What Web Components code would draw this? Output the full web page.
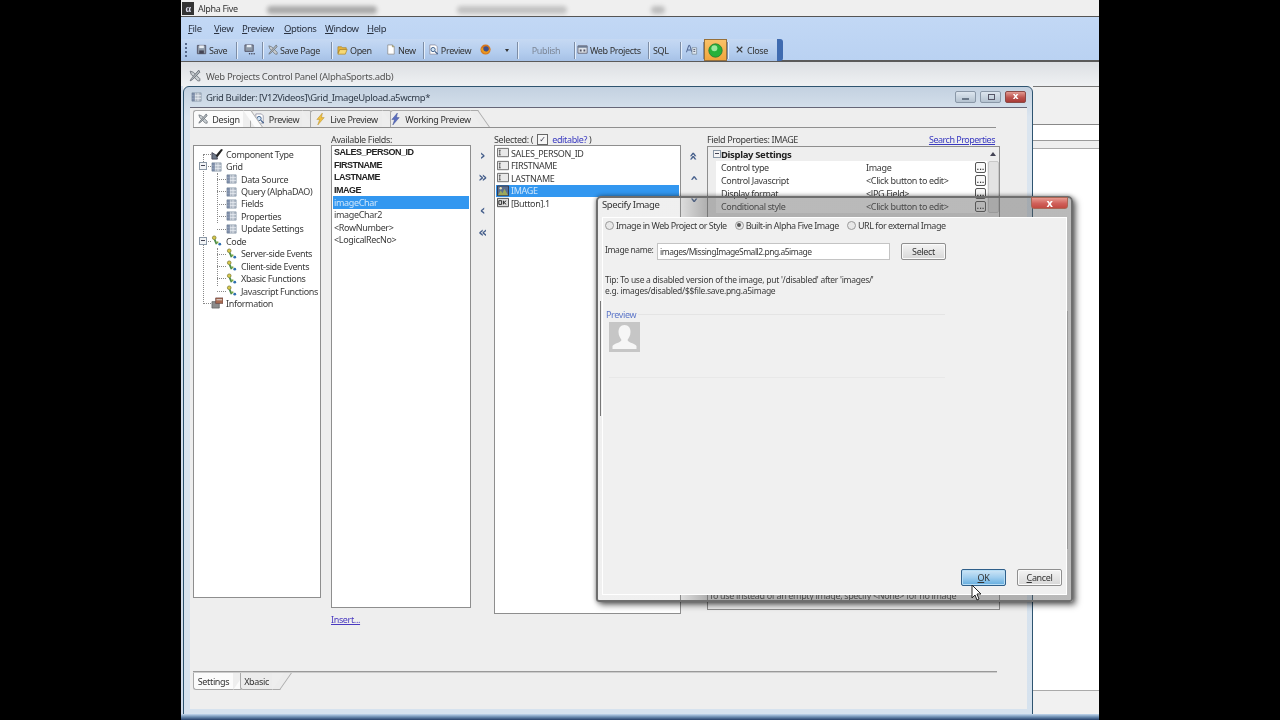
<!DOCTYPE html>
<html>
<head>
<meta charset="utf-8">
<title>Alpha Five</title>
<style>
html,body{margin:0;padding:0;background:#000;height:100%;overflow:hidden}
body{display:flex;justify-content:flex-start;padding-left:181px;box-sizing:border-box;font:9px "Noto Sans","Liberation Sans",sans-serif;letter-spacing:-.35px;color:#333}
</style>
</head>
<body>
<a5-app></a5-app>
<script>
const ICONS = {
	save:`<path d="M1.500 1.500h9v9h-9z" fill="#8d99a8" stroke="#556"/><path d="M3.500 1.500h5v3h-5z" fill="#e8eef5"/><path d="M3.500 7h5v3.500h-5z" fill="#445"/>`,
	saveall:`<path d="M1 1h9v7H1z" fill="#8d99a8" stroke="#556"/><path d="M3 1h5v2.500H3z" fill="#e8eef5"/><circle cx="6" cy="10.500" r=".8" fill="#334"/><circle cx="8.500" cy="10.500" r=".8" fill="#334"/><circle cx="11" cy="10.500" r=".8" fill="#334"/>`,
	tools:`<path d="M2 2l3 1 6 6 0 2-2 0-6-6z" fill="#c9ced2" stroke="#6a7078" stroke-width=".8"/><path d="M10 1l1 2-7 7-2 1 1-2z" fill="#aeb5ba" stroke="#6a7078" stroke-width=".8"/>`,
	open:`<path d="M1 3h4l1 1h4v2H3L1 10z" fill="#e5b43f" stroke="#a67c1c" stroke-width=".7"/><path d="M3 6h8l-2 5H1z" fill="#f6d874" stroke="#a67c1c" stroke-width=".7"/>`,
	doc:`<path d="M3 1h5l2 2v8H3z" fill="#fff" stroke="#888" stroke-width=".8"/><path d="M8 1v2h2" fill="#e0c060" stroke="#997"/>`,
	find:`<path d="M2 1h6l2 2v8H2z" fill="#fff" stroke="#889" stroke-width=".8"/><circle cx="5.500" cy="6" r="2.300" fill="#cfe3f5" stroke="#3a5a88"/><path d="M7.500 8l3 3" stroke="#3a5a88" stroke-width="1.300"/>`,
	firefox:`<circle cx="6" cy="6" r="5.500" fill="#d8761c"/><circle cx="6.500" cy="5.500" r="3" fill="#40508a"/><path d="M1 6c1 3 4 5 7 4 2-1 3-3 3-5-1 2-3 4-5 3C4 7.500 3 6 3.500 4 2 4 1.300 5 1 6z" fill="#e89a22"/>`,
	web:`<path d="M1 2h10v8H1z" fill="#dde3ea" stroke="#667"/><path d="M1 2h10v2H1z" fill="#6b7a92"/><path d="M3 6h2v2H3zM7 6h2v2H7z" fill="#556"/>`,
	font:`<path d="M.5 9L3 1.500h1L6.500 9M1.700 6.500h3.600" fill="none" stroke="#445a88" stroke-width="1"/><path d="M6.500 4h5v7h-5z" fill="#dfe9f2" stroke="#7b8a98" stroke-width=".8"/><path d="M8 6h2M8 8h2" stroke="#556"/>`,
	green:`<circle cx="6.500" cy="6.500" r="5.800" fill="#27b13a" stroke="#2a7a34" stroke-width=".7"/><circle cx="5.500" cy="4.500" r="2.600" fill="#9be89f"/>`,
	close:`<path d="M3 3l6 6M9 3l-6 6" stroke="#3a3a3a" stroke-width="1.300"/>`,
	grid:`<path d="M1 2h10v9H1z" fill="#b4bcc8" stroke="#8090a4" stroke-width=".7"/><path d="M4.300 2v9M7.600 2v9M1 5h10M1 8h10" stroke="#eef2f6" stroke-width=".8"/><path d="M1 2h3.300v9H1z" fill="#5c6f92" opacity=".6"/>`,
	type:`<path d="M1 12V5l5 3 1 4z" fill="#6f7a8a" stroke="#445"/><path d="M5 8l6-7 2 1-6 8z" fill="#222"/>`,
	code:`<circle cx="3.500" cy="3" r="2" fill="#d8c84a" stroke="#6a6a20" stroke-width=".7"/><path d="M4 5l2 5" stroke="#4a8a4a" stroke-width="2"/><circle cx="9.500" cy="10" r="1.500" fill="#2e6fb0"/><path d="M6 8h2" stroke="#7aa83c" stroke-width="2"/>`,
	info:`<path d="M1 5h8v7H1z" fill="#8c8c8c" stroke="#555" stroke-width=".7"/><path d="M5 1h8v6H5z" fill="#a86a50" stroke="#644" stroke-width=".7"/><path d="M6 3h6" stroke="#eee"/>`,
	field:`<path d="M.5 1.500h12v9H.5z" fill="#e9e9e9" stroke="#666"/><path d="M3 3.500v5M2 3.500h2M2 8.500h2" stroke="#333" stroke-width=".8"/>`,
	picture:`<path d="M.5 1h12v10.500H.5z" fill="#5a6e90" stroke="#334"/><path d="M1 11l3-5 2 3 2-5 4 7z" fill="#9ca85c"/><circle cx="4" cy="3.500" r="1.300" fill="#e8e0b0"/>`,
	button:`<path d="M.5 1.500h12v9H.5z" fill="#ddd" stroke="#444"/><path d="M2 4h3v4H2zM7 4v4M10 4L7.500 6l2.500 2" fill="none" stroke="#222" stroke-width="1"/>`,
	bolt:`<path d="M8 0L2 7h3L3 13l7-8H7z" fill="#f0c040" stroke="#b08820" stroke-width=".5"/>`,
	boltb:`<path d="M8 0L2 7h3L3 13l7-8H7z" fill="#5a6ec0" stroke="#3a4a90" stroke-width=".5"/>`
};
class A5Icon extends HTMLElement {
	constructor(){
		super();
		this.attachShadow({mode:"open"});
		const size = this.getAttribute("size")||12;
		this.shadowRoot.innerHTML = `
			<style>:host{display:inline-flex;flex:none;width:${size}px;height:${size}px}svg{display:block}</style>
			<svg width="${size}" height="${size}" viewBox="0 0 13 13">${ICONS[this.getAttribute("name")]||""}</svg>`;
	}
}
customElements.define("a5-icon",A5Icon);

class A5Menubar extends HTMLElement {
	constructor(){
		super();
		this.attachShadow({mode:"open"});
		const items = [["File",26],["View",28],["Preview",42],["Options",41],["Window",42],["Help",30]];
		this.shadowRoot.innerHTML = `
			<style>
				:host{display:flex;height:22px;align-items:center;padding-left:7px;font-size:9.500px;letter-spacing:-.4px;color:#2a3240}
				span{display:block}
				span::first-letter{text-decoration:underline}
			</style>
			${items.map(i=>`<span style="width:${i[1]}px">${i[0]}</span>`).join("")}`;
	}
}
customElements.define("a5-menubar",A5Menubar);

class A5Toolbar extends HTMLElement {
	constructor(){
		super();
		this.attachShadow({mode:"open"});
		// [icon, text, width of the whole item, left padding when it does not sit centred]
		const items = [
			["save","Save",41,1],"|",["saveall","",25],"|",["tools","Save Page",68,4],"|",
			["open","Open",50,5],["doc","New",41,3],"|",["find","Preview",51],["firefox","",22],["drop","",20],"|",
			[null,"Publish",56],"|",["web","Web Projects",73,2],"|",[null,"SQL",31,4],"|",["font","",22],"|",
			["green","",23],"|",["close","Close",46]
		];
		this.shadowRoot.innerHTML = `
			<style>
				:host{display:flex;align-items:center;height:22px;width:602px;box-sizing:border-box;padding-left:4px;white-space:nowrap;
					background:linear-gradient(#c6d9f3,#b4cdee 60%,#a6c1e6);border-right:6px solid #3f6bb0;border-radius:0 3px 3px 0;color:#333}
				.grip{width:2px;height:14px;margin-right:6px;border-left:2px dotted #56688a}
				.sep{width:1px;height:17px;background:#7d8da5;box-shadow:1px 0 #e4eefb;flex:none}
				.item{display:flex;align-items:center;justify-content:center;gap:1px;flex:none;height:22px;box-sizing:border-box}
				.item.off{color:#7d8797}
				.drop{width:0;height:0;border:2px solid transparent;border-top:3px solid #333;margin-top:3px}
				.on{background:linear-gradient(#f9c36a,#f0a53c);outline:1px solid #97703a;outline-offset:-1px}
			</style>
			<div class="grip"></div>
			${items.map(i=>{
				if (i=="|") return `<div class="sep"></div>`;
				if (i[0]=="drop") return `<div class="item" style="width:${i[2]}px"><div class="drop"></div></div>`;
				const cls = i[1]=="Publish"?"off":i[0]=="green"?"on":"";
				const place = i[3]===undefined?"":`justify-content:flex-start;padding-left:${i[3]}px;`;
				return `<div class="item ${cls}" style="${place}width:${i[2]}px">${i[0]?`<a5-icon name="${i[0]}" ${i[0]=="green"?'size="15"':""}></a5-icon>`:""}${i[1]?`<span>${i[1]}</span>`:""}</div>`;
			}).join("")}`;
	}
}
customElements.define("a5-toolbar",A5Toolbar);

class A5Tabs extends HTMLElement {
	constructor(){
		super();
		this.attachShadow({mode:"open"});
		const items = JSON.parse(this.getAttribute("items"));
		this.shadowRoot.innerHTML = `
			<style>
				:host{display:flex;align-items:flex-end;height:18px;color:#333;white-space:nowrap}
				.tab{position:relative;display:flex;align-items:center;justify-content:center;gap:3px;height:17px;box-sizing:border-box;
					border:1px solid #aaa;border-right:0;border-bottom:0;border-radius:3px 0 0 0;background:#ececec;flex:none}
				.tab span,.tab a5-icon{position:relative;z-index:1}
				.tab::after{content:"";position:absolute;top:-1px;right:-8px;width:8px;height:17px;box-sizing:border-box;
					border-top:1px solid #aaa;border-right:1px solid #aaa;background:inherit;transform-origin:top left;transform:skewX(35deg)}
				.tab.on{background:#fbfbfb;z-index:2}
				:host([below]) .tab{border-top:0;border-bottom:1px solid #aaa;border-radius:0 0 0 3px}
				:host([below]){align-items:flex-start}
				:host([below]) .tab::after{top:0;border-top:0;border-bottom:1px solid #aaa;transform:skewX(-35deg);transform-origin:bottom left}
				:host([below]) .tab.on{z-index:auto}
				:host([below]) .tab:not(.on){z-index:1}
			</style>
			${items.map((t,i)=>`<div class="tab ${i==0?"on":""}" style="width:${t[2]}px;margin-right:${t[3]||0}px">${t[1]?`<a5-icon name="${t[1]}"></a5-icon>`:""}<span>${t[0]}</span></div>`).join("")}`;
	}
}
customElements.define("a5-tabs",A5Tabs);

class A5Tree extends HTMLElement {
	constructor(){
		super();
		this.attachShadow({mode:"open"});
		const rows = [
			[0,"type","Component Type"],[0,"grid","Grid",1],[1,"grid","Data Source"],[1,"grid","Query (AlphaDAO)"],[1,"grid","Fields"],
			[1,"grid","Properties"],[1,"grid","Update Settings"],[0,"code","Code",1],[1,"code","Server-side Events"],
			[1,"code","Client-side Events"],[1,"code","Xbasic Functions"],[1,"code","Javascript Functions"],[0,"info","Information"]
		];
		this.shadowRoot.innerHTML = `
			<style>
				:host{display:block;position:relative;background:#fff;border:1px solid #8e8e8e;box-sizing:border-box;padding-top:2px;color:#3a3a3a;overflow:hidden;white-space:nowrap}
				.row{position:relative;display:flex;align-items:center;gap:3px;height:12.450px;padding-left:17px}
				.row.l1{padding-left:32px}
				.row::before{content:"";position:absolute;left:9px;top:6px;width:8px;border-top:1px dotted #888}
				.row.l1::before{left:23px;width:9px}
				.box{position:absolute;left:5px;top:2px;width:8px;height:8px;box-sizing:border-box;border:1px solid #8a97a5;background:#f2f4f6;z-index:1}
				.box::before{content:"";position:absolute;left:1px;right:1px;top:2px;border-top:1px solid #445}
				.vert{position:absolute;left:9px;top:8px;height:148px;border-left:1px dotted #888}
				.vert2{position:absolute;left:23px;border-left:1px dotted #888}
			</style>
			<div class="vert"></div>
			<div class="vert2" style="top:27px;height:50px"></div>
			<div class="vert2" style="top:102px;height:38px"></div>
			${rows.map(r=>`<div class="row l${r[0]}">${r[3]?`<div class="box"></div>`:""}<a5-icon name="${r[1]}"></a5-icon><span>${r[2]}</span></div>`).join("")}`;
	}
}
customElements.define("a5-tree",A5Tree);

class A5Listbox extends HTMLElement {
	constructor(){
		super();
		this.attachShadow({mode:"open"});
		const rows = JSON.parse(this.getAttribute("rows"));
		this.shadowRoot.innerHTML = `
			<style>
				:host{display:block;background:#fff;border:1px solid #8e8e8e;box-sizing:border-box;padding:1px;color:#3a3a3a;overflow:hidden;white-space:nowrap}
				:host([tight]){padding-top:0}
				:host([tight]) .row:first-child{margin-top:-1.500px}
				.row{display:flex;align-items:center;gap:1px;height:12.500px;padding-left:1px}
				:host([tight]) .row{padding-left:1px}
				.row.b{font:bold 9px "Liberation Sans",sans-serif;color:#222;letter-spacing:-.5px}
				.row.sel{background:#3297f0;color:#cfe6fb}
				a5-icon{margin-right:1px}
			</style>
			${rows.map(r=>`<div class="row ${r.c||""}">${r.i?`<a5-icon name="${r.i}"></a5-icon>`:""}<span>${r.t.replace(/</g,"&lt;")}</span></div>`).join("")}`;
	}
}
customElements.define("a5-listbox",A5Listbox);

class A5Arrows extends HTMLElement {
	constructor(){
		super();
		this.attachShadow({mode:"open"});
		const rows = JSON.parse(this.getAttribute("rows"));
		this.shadowRoot.innerHTML = `
			<style>
				:host{display:flex;flex-direction:column;align-items:center;color:#47608c;font:bold 14px "DejaVu Sans",sans-serif}
				div{line-height:12px;height:12px}
			</style>
			${rows.map(r=>`<div style="margin-bottom:${r[1]}px;${r[2]?`transform:${r[2]}`:""}">${r[0].replace(/</g,"&lt;")}</div>`).join("")}`;
	}
}
customElements.define("a5-arrows",A5Arrows);

class A5Props extends HTMLElement {
	constructor(){
		super();
		this.attachShadow({mode:"open"});
		const rows = [["Control type","Image"],["Control Javascript","<Click button to edit>"],["Display format","<JPG Field>"],["Conditional style","<Click button to edit>"]];
		this.shadowRoot.innerHTML = `
			<style>
				:host{display:flex;flex-direction:column;background:#eee;border:1px solid #8e8e8e;box-sizing:border-box;color:#3a3a3a;white-space:nowrap;overflow:hidden}
				.head{display:flex;align-items:center;height:14px;padding-left:5px;font-weight:bold;font-size:9.500px;color:#222;margin-right:14px}
				.box{width:8px;height:8px;box-sizing:border-box;border:1px solid #8a97a5;position:relative;background:#f4f4f4}
				.box::before{content:"";position:absolute;left:1px;right:1px;top:2px;border-top:1px solid #445}
				.up{margin-left:auto;margin-right:-11px;width:0;height:0;border:3px solid transparent;border-bottom:4px solid #445;margin-top:-3px}
				.main{display:flex;flex:1}
				.rows{flex:1}
				.row{display:flex;align-items:center;height:13px;background:#fff;margin-left:8px}
				.label{width:145px;padding-left:5px}
				.value{flex:1}
				.more{width:11px;height:11px;box-sizing:border-box;border:1px solid #555;border-radius:2px;background:#f8f8f8;font:bold 7px/11px "DejaVu Sans",sans-serif;letter-spacing:0;text-align:center;margin-right:1px;overflow:hidden}
				.bar{width:11px;margin-left:1px;background:#e2e2e2;height:52px;border:1px solid #c8c8c8;box-sizing:border-box;border-radius:2px}
				.note{margin-top:auto;margin-bottom:7px;padding-left:1px;height:12px;line-height:12px}
			</style>
			<div class="head"><div class="box"></div><span>Display Settings</span><div class="up"></div></div>
			<div class="main">
				<div class="rows">
					${rows.map(r=>`<div class="row"><span class="label">${r[0]}</span><span class="value">${r[1].replace(/</g,"&lt;")}</span><div class="more">...</div></div>`).join("")}
				</div>
				<div class="bar"></div>
			</div>
			<div class="note">To use instead of an empty image, specify &lt;None&gt; for no image</div>`;
	}
}
customElements.define("a5-props",A5Props);

class A5Button extends HTMLElement {
	constructor(){
		super();
		this.attachShadow({mode:"open"});
		this.shadowRoot.innerHTML = `
			<style>
				:host{display:inline-flex;align-items:center;justify-content:center;box-sizing:border-box;height:17px;width:45px;border:1px solid #8f8f8f;border-radius:2px;flex:none;
					background:linear-gradient(#f4f4f4,#e6e6e6 50%,#d8d8d8);color:#333;box-shadow:inset 0 0 0 1px #fafafa}
				:host([primary]){border-color:#2f5f8a;background:linear-gradient(#cfe6f6,#9fcdee 50%,#63addf);box-shadow:inset 0 0 0 1px #b7ddf5}
			</style>
			<slot></slot>`;
	}
}
customElements.define("a5-button",A5Button);

class A5Radio extends HTMLElement {
	constructor(){
		super();
		this.attachShadow({mode:"open"});
		this.shadowRoot.innerHTML = `
			<style>
				:host{display:inline-flex;align-items:center;gap:2px;color:#3a3a3a;white-space:nowrap;letter-spacing:-.47px}
				i{display:block;width:7px;height:7px;border:1px solid #9a9a9a;border-radius:50%;background:#e8e8e8;position:relative}
				:host([on]) i::after{content:"";position:absolute;left:1.500px;top:1.500px;width:4px;height:4px;border-radius:50%;background:#555}
			</style>
			<i></i><slot></slot>`;
	}
}
customElements.define("a5-radio",A5Radio);

class A5SpecifyImage extends HTMLElement {
	constructor(){
		super();
		this.attachShadow({mode:"open"});
		this.shadowRoot.innerHTML = `
			<style>
				:host{position:absolute;left:415px;top:196px;width:477px;height:406px;box-sizing:border-box;display:flex;flex-direction:column;
					border:2px solid #6e6e6e;border-radius:5px 5px 3px 3px;background:linear-gradient(to right,rgba(130,130,130,.12) 17%,rgba(90,90,90,.42) 23%);box-shadow:3px 3px 6px rgba(0,0,0,.55),0 0 4px rgba(0,0,0,.4);padding:0 4px 5px;color:#3a3a3a}
				.title{position:relative;display:flex;align-items:flex-start;height:19px;flex:none;padding-top:1px;box-sizing:border-box;line-height:12px;font-size:9.500px;letter-spacing:-.4px;color:#333}
				.x{position:absolute;right:-1px;top:-1px;width:37px;height:12px;background:linear-gradient(#e79a90,#d0605a 55%,#c24a42);border:1px solid #a65;border-radius:0 0 3px 3px;box-sizing:border-box;
					display:flex;align-items:center;justify-content:center;color:#fff;font:bold 10px "DejaVu Sans",sans-serif}
				.body{flex:1;background:#f0f0f0;border:1px solid #fff;display:flex;flex-direction:column;position:relative;padding:0 3px 0 2px}
				.radios{display:flex;gap:8px;height:14px;align-items:center}
				.name{display:flex;align-items:center;margin-top:9px;height:20px}
				.name label{width:52px;white-space:nowrap;flex:none;font-size:8.500px;letter-spacing:-.4px;padding-bottom:3px;box-sizing:border-box}
				.input{width:233px;height:17px;box-sizing:border-box;border:1px solid #c4c4c4;background:#fff;padding-left:2px;line-height:15px;font-size:8.500px;letter-spacing:-.5px;white-space:nowrap;overflow:hidden}
				.name a5-button{margin-left:11px}
				.tip{margin-top:12.500px;font-size:8.500px;letter-spacing:-.28px;line-height:11px}
				.group{margin:13px 0 0 1px;line-height:11px;color:#5c76c8}
				.rule{border-top:1px solid #e4e4e4;width:307px;margin-top:-6px;margin-left:33px}
				.avatar{margin:7.500px 0 0 4px;display:block}
				.rule2{border-top:1px solid #e8e8e8;width:336px;margin:25px 0 0 4px}
				.foot{margin-top:auto;display:flex;justify-content:flex-end;gap:11px;padding:0 1px 8px 0}
				.cursor{position:absolute;left:368px;top:366px;z-index:3}
				.edge{position:absolute;width:1px;background:#777}
				u{text-decoration:underline}
			</style>
			<div class="title"><span>Specify Image</span><div class="x">x</div></div>
			<div class="body">
				<div class="edge" style="left:-3px;top:83px;height:115px"></div>
				<div class="edge" style="right:-2px;top:93px;height:238px;background:#999"></div>
				<div class="radios">
					<a5-radio>Image in Web Project or Style</a5-radio>
					<a5-radio on>Built-in Alpha Five Image</a5-radio>
					<a5-radio>URL for external Image</a5-radio>
				</div>
				<div class="name">
					<label>Image name:</label>
					<div class="input">images/MissingImageSmall2.png.a5image</div>
					<a5-button>Select</a5-button>
				</div>
				<div class="tip">Tip: To use a disabled version of the image, put '/disabled' after 'images/'<br>e.g. images/disabled/$$file.save.png.a5image</div>
				<div class="group">Preview</div>
				<div class="rule"></div>
				<svg class="avatar" width="31" height="30" viewBox="0 0 31 30">
					<path d="M0 0h31v30H0z" fill="#c6c6c6"/>
					<path d="M15.500 3c-4 0-6 3-6 7s2 6 3 8c-1 3-7 3-9 6v3l12 0 12 0v-3c-2-3-8-3-9-6 1-2 3-4 3-8s-2-7-6-7z" fill="#f6f6f6"/>
				</svg>
				<div class="rule2"></div>
				<div class="foot">
					<a5-button primary><span><u>O</u>K</span></a5-button>
					<a5-button><span><u>C</u>ancel</span></a5-button>
				</div>
				<svg class="cursor" width="13" height="18" viewBox="0 0 13 18"><path d="M1 1v13l3-3 2 5 2-1-2-5h4z" fill="#fff" stroke="#222"/></svg>
			</div>`;
	}
}
customElements.define("a5-specify-image",A5SpecifyImage);

class A5GridBuilder extends HTMLElement {
	constructor(){
		super();
		this.attachShadow({mode:"open"});
		const avail = [
			{t:"SALES_PERSON_ID",c:"b"},{t:"FIRSTNAME",c:"b"},{t:"LASTNAME",c:"b"},{t:"IMAGE",c:"b"},
			{t:"imageChar",c:"sel"},{t:"imageChar2"},{t:"<RowNumber>"},{t:"<LogicalRecNo>"}
		];
		const sel = [
			{t:"SALES_PERSON_ID",i:"field"},{t:"FIRSTNAME",i:"field"},{t:"LASTNAME",i:"field"},
			{t:"IMAGE",i:"picture",c:"sel"},{t:"[Button].1",i:"button"}
		];
		this.shadowRoot.innerHTML = `
			<style>
				:host{position:absolute;left:2px;top:86px;width:850px;height:630px;box-sizing:border-box;display:flex;flex-direction:column;
					border:1px solid #2e5470;border-radius:6px 6px 0 0;background:linear-gradient(#c3d1e0,#dbe5ef 30px,#d6e2ee);padding:0 5px 6px 6px;color:#3a3a3a}
				.title{display:flex;align-items:center;height:21px;flex:none;gap:3px;font-size:9.500px;letter-spacing:-.4px;color:#2f3a48;padding-left:1px;border-bottom:1px solid #667;box-sizing:border-box}
				.ctl{display:flex;margin-left:auto;gap:4px;padding-right:1px}
				.ctl div{width:21px;height:12px;box-sizing:border-box;border:1px solid #8a98a8;border-radius:2px;background:linear-gradient(#dde6ef,#b4c2d0);position:relative}
				.ctl .min::after{content:"";position:absolute;left:6px;right:6px;bottom:2px;height:2px;background:#6a7888}
				.ctl .max::after{content:"";position:absolute;left:7px;top:2px;width:7px;height:6px;box-sizing:border-box;border:1px solid #556}
				.ctl .cl{background:linear-gradient(#e29a92,#bd5450 55%,#a83a36);border-color:#8a4a48;color:#fff;font:bold 9px/9px "DejaVu Sans",sans-serif;text-align:center}
				.body{flex:1;background:#eeeeee;display:flex;flex-direction:column;padding:1px 3px 0 3px;min-height:0}
				.tabline{border-top:1px solid #8f8f8f;width:803px;flex:none}
				.cols{display:grid;grid-template-columns:138px 140px 23px 188px 25px 293px;margin-top:6px;height:480px;flex:none}
				.treecol{padding-top:11px;display:flex}
				.treecol a5-tree{width:128px;height:453px}
				.col{display:flex;flex-direction:column}
				.cap{display:flex;white-space:nowrap;align-items:center;height:11px}
				.avail a5-listbox{height:463px}
				.sel a5-listbox{height:469px;width:187px}
				.check{display:inline-block;width:9px;height:9px;border:1px solid #666;margin:0 4px;background:#f6f6f6;font:bold 8px/9px "DejaVu Sans",sans-serif;letter-spacing:0;text-align:center;color:#334}
				.blue{color:#3a3ac0}
				.arrows1{padding-top:15px}
				.arrows2{padding-top:16px}
				.props .cap{justify-content:space-between;padding-right:5px;width:293px;box-sizing:border-box}
				.props a5-props{height:464px;width:293px;margin-top:1px}
				.link{color:#3a3ac0;text-decoration:underline;letter-spacing:-.5px}
				.insert{margin:0 0 0 138px;color:#4a3ac0;text-decoration:underline;height:12px;line-height:12px;flex:none}
				.bottomline{margin-top:45px;width:804px;height:2px;border-top:1px solid #999;border-bottom:1px solid #ccc;box-sizing:border-box;flex:none}
			</style>
			<div class="title"><a5-icon name="grid"></a5-icon><span>Grid Builder: [V12Videos]\\Grid_ImageUpload.a5wcmp*</span>
				<div class="ctl"><div class="min"></div><div class="max"></div><div class="cl">x</div></div></div>
			<div class="body">
				<a5-tabs items='[["Design","tools",50,7],["Preview","find",52,8],["Live Preview","bolt",72,8],["Working Preview","boltb",80]]'></a5-tabs>
				<div class="tabline"></div>
				<div class="cols">
					<div class="treecol"><a5-tree></a5-tree></div>
					<div class="col avail">
						<div class="cap">Available Fields:</div>
						<a5-listbox tight rows='${JSON.stringify(avail)}'></a5-listbox>
					</div>
					<a5-arrows class="arrows1" rows='[["›",10],["»",21],["‹",10],["«",0]]'></a5-arrows>
					<div class="col sel">
						<div class="cap">Selected: (<span class="check">✓</span><span class="blue">editable?</span>&nbsp;)</div>
						<a5-listbox rows='${JSON.stringify(sel)}'></a5-listbox>
					</div>
					<a5-arrows class="arrows2" rows='[["«",10,"rotate(90deg)"],["‹",10,"rotate(90deg)"],["›",0,"rotate(90deg)"]]'></a5-arrows>
					<div class="col props">
						<div class="cap"><span>Field Properties: IMAGE</span><span class="link">Search Properties</span></div>
						<a5-props></a5-props>
					</div>
				</div>
				<div class="insert">Insert...</div>
				<div class="bottomline"></div>
				<a5-tabs below items='[["Settings","",40,7],["Xbasic","",32]]'></a5-tabs>
			</div>`;
	}
}
customElements.define("a5-grid-builder",A5GridBuilder);

class A5Behind extends HTMLElement {
	constructor(){
		super();
		this.attachShadow({mode:"open"});
		this.shadowRoot.innerHTML = `
			<style>
				:host{position:absolute;left:852px;top:86px;width:66px;height:634px;display:flex;flex-direction:column;background:#fff;border-top:1px solid #777;box-sizing:border-box}
				div{flex:none;box-sizing:border-box}
				.a{height:38px;background:#f0f0f0;border-bottom:1px solid #888}
				.b{height:16px;background:#fff;border-bottom:1px solid #999}
				.c{height:8px;background:#eee;border-bottom:1px solid #aaa}
				.d{flex:1;background:#fff;border-bottom:1px solid #aaa}
				.e{height:23px;background:#f1f1f1}
				.f{height:6px;background:linear-gradient(#c4d8ee,#6a8cb0 50%,#26406a)}
			</style>
			<div class="a"></div><div class="b"></div><div class="c"></div><div class="d"></div><div class="e"></div><div class="f"></div>`;
	}
}
customElements.define("a5-behind",A5Behind);

class A5App extends HTMLElement {
	constructor(){
		super();
		this.attachShadow({mode:"open"});
		this.shadowRoot.innerHTML = `
			<style>
				:host{display:flex;flex-direction:column;position:relative;width:918px;height:720px;overflow:hidden;background:#eef0f2;filter:blur(.3px)}
				.top{display:flex;align-items:center;height:17px;flex:none;background:#efefef;border-bottom:1px solid #555;box-sizing:border-box;color:#333;gap:4px;padding-left:1px}
				.logo{width:12px;height:13px;background:#333;color:#dde;font:bold 10px/13px "Liberation Serif",serif;text-align:center}
				.smear{position:absolute;top:6px;height:8px;background:#8c8c8c;border-radius:4px;filter:blur(2px)}
				.blue{height:45px;flex:none;background:linear-gradient(#c2d8f5,#bad2f2);border-bottom:2px solid #5a5a5a;box-sizing:border-box}
				.panel{height:24px;flex:none;display:flex;align-items:center;gap:4px;padding:4px 0 0 7px;background:linear-gradient(#dcdfe3,#eff1f3);font-size:9.500px;color:#555;box-sizing:border-box}
				.left{position:absolute;left:0;top:86px;bottom:0;width:2px;background:#d0dceb}
				.bottom{position:absolute;left:0;width:852px;bottom:0;height:6px;background:linear-gradient(#c4d8ee,#6a8cb0 50%,#26406a)}
			</style>
			<div class="top"><div class="logo">α</div><span>Alpha Five</span></div>
			<div class="smear" style="left:86px;width:110px;opacity:.7"></div>
			<div class="smear" style="left:276px;width:110px;opacity:.45"></div>
			<div class="smear" style="left:470px;width:14px;opacity:.5"></div>
			<div class="blue"><a5-menubar></a5-menubar><a5-toolbar></a5-toolbar></div>
			<div class="panel"><a5-icon name="tools" size="14"></a5-icon><span>Web Projects Control Panel (AlphaSports.adb)</span></div>
			<div class="left"></div>
			<a5-behind></a5-behind>
			<a5-grid-builder></a5-grid-builder>
			<div class="bottom"></div>
			<a5-specify-image></a5-specify-image>`;
	}
}
customElements.define("a5-app",A5App);
</script>
</body>
</html>
